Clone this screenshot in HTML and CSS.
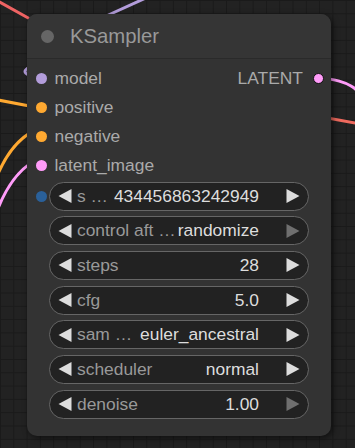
FILE: index.html
```html
<!DOCTYPE html>
<html lang="en">
<head>
    <meta charset="UTF-8">
    <meta name="viewport" content="width=device-width, initial-scale=1.0">
    <title>KSampler</title>
    <link rel="stylesheet" href="styles.css">
</head>
<body>
    <svg class="links" width="355" height="448" viewBox="0 0 355 448">
        <path d="M -4 0 L 30 19" stroke="#ee6363"/>
        <path d="M 104 17 L 148 -3" stroke="#b39ddb"/>
        <path d="M 45 80 Q 5 72 45 62" stroke="#b39ddb"/>
        <path d="M -2 100 L 40 108" stroke="#ffa931"/>
        <path d="M -8 190 Q 8 140 40 128" stroke="#ffa931"/>
        <path d="M -8 226 Q 8 172 40 158" stroke="#ff9cf9"/>
        <path d="M 317 77 C 338 80 344 82 351 86 S 358 92 362 102" stroke="#ff9cf9"/>
        <path d="M 322 117 L 360 124" stroke="#ef6a5e"/>
    </svg>

    <div class="node">
        <div class="title">
            <span class="title-dot"></span>
            <span>KSampler</span>
        </div>
        <div class="slots">
            <div class="slot">
                <span class="dot model"></span>model
                <span class="output">LATENT <span class="dot out"></span></span>
            </div>
            <div class="slot"><span class="dot cond"></span>positive</div>
            <div class="slot"><span class="dot cond"></span>negative</div>
            <div class="slot"><span class="dot latent"></span>latent_image</div>
        </div>
        <div class="widgets">
            <div class="wrow">
                <span class="wdot int"></span>
                <div class="widget">
                    <svg class="arrow" viewBox="0 0 13 14"><path d="M0 7 L13 0 L13 14 Z"/></svg>
                    <span class="label">s &hellip;</span>
                    <span class="value">434456863242949</span>
                    <svg class="arrow" viewBox="0 0 13 14"><path d="M13 7 L0 0 L0 14 Z"/></svg>
                </div>
            </div>
            <div class="wrow">
                <span class="wdot"></span>
                <div class="widget">
                    <svg class="arrow" viewBox="0 0 13 14"><path d="M0 7 L13 0 L13 14 Z"/></svg>
                    <span class="label">control aft &hellip;</span>
                    <span class="value">randomize</span>
                    <svg class="arrow dim" viewBox="0 0 13 14"><path d="M13 7 L0 0 L0 14 Z"/></svg>
                </div>
            </div>
            <div class="wrow">
                <span class="wdot"></span>
                <div class="widget">
                    <svg class="arrow" viewBox="0 0 13 14"><path d="M0 7 L13 0 L13 14 Z"/></svg>
                    <span class="label">steps</span>
                    <span class="value">28</span>
                    <svg class="arrow" viewBox="0 0 13 14"><path d="M13 7 L0 0 L0 14 Z"/></svg>
                </div>
            </div>
            <div class="wrow">
                <span class="wdot"></span>
                <div class="widget">
                    <svg class="arrow" viewBox="0 0 13 14"><path d="M0 7 L13 0 L13 14 Z"/></svg>
                    <span class="label">cfg</span>
                    <span class="value">5.0</span>
                    <svg class="arrow" viewBox="0 0 13 14"><path d="M13 7 L0 0 L0 14 Z"/></svg>
                </div>
            </div>
            <div class="wrow">
                <span class="wdot"></span>
                <div class="widget">
                    <svg class="arrow" viewBox="0 0 13 14"><path d="M0 7 L13 0 L13 14 Z"/></svg>
                    <span class="label">sam &hellip;</span>
                    <span class="value">euler_ancestral</span>
                    <svg class="arrow" viewBox="0 0 13 14"><path d="M13 7 L0 0 L0 14 Z"/></svg>
                </div>
            </div>
            <div class="wrow">
                <span class="wdot"></span>
                <div class="widget">
                    <svg class="arrow" viewBox="0 0 13 14"><path d="M0 7 L13 0 L13 14 Z"/></svg>
                    <span class="label">scheduler</span>
                    <span class="value">normal</span>
                    <svg class="arrow" viewBox="0 0 13 14"><path d="M13 7 L0 0 L0 14 Z"/></svg>
                </div>
            </div>
            <div class="wrow">
                <span class="wdot"></span>
                <div class="widget">
                    <svg class="arrow" viewBox="0 0 13 14"><path d="M0 7 L13 0 L13 14 Z"/></svg>
                    <span class="label">denoise</span>
                    <span class="value">1.00</span>
                    <svg class="arrow dim" viewBox="0 0 13 14"><path d="M13 7 L0 0 L0 14 Z"/></svg>
                </div>
            </div>
        </div>
    </div>
</body>
</html>
```

FILE: styles.css
```css
body {
    margin: 0;
    width: 355px;
    height: 448px;
    overflow: hidden;
    position: relative;
    font-family: "Liberation Sans", Arial, sans-serif;
    background-color: #222;
    background-image:
        linear-gradient(to right, #1a1a1a 1px, transparent 1px),
        linear-gradient(to bottom, #1a1a1a 1px, transparent 1px);
    background-size: 13.3px 13.3px;
}
.links {
    position: absolute;
    left: 0;
    top: 0;
}
.links path {
    fill: none;
    stroke-width: 3;
    stroke-linecap: round;
}
.node {
    position: absolute;
    left: 27px;
    top: 14px;
    width: 304px;
    background: #333;
    border-radius: 10px;
    box-shadow: 2px 2px 6px rgba(0, 0, 0, 0.55);
}
.title {
    height: 44px;
    display: flex;
    align-items: center;
    padding-left: 14px;
    background: #353535;
    border-radius: 10px 10px 0 0;
    border-bottom: 1px solid #2a2a2a;
    color: #999;
    font-size: 20.3px;
}
.title-dot {
    width: 13px;
    height: 13px;
    border-radius: 50%;
    background: #666;
    margin-right: 16px;
}
.slots {
    padding-top: 4.5px;
}
.slot {
    height: 29px;
    display: flex;
    align-items: center;
    padding: 0 7.5px 0 8.5px;
    color: #aaa;
    font-size: 17.4px;
}
.dot {
    width: 11px;
    height: 11px;
    border-radius: 50%;
    margin-right: 8px;
    flex: none;
}
.model { background: #b39ddb; }
.cond { background: #ffa931; }
.latent { background: #ff9cf9; }
.output {
    margin-left: auto;
    display: flex;
    align-items: center;
}
.dot.out {
    width: 9px;
    height: 9px;
    background: #ff9cf9;
    border: 1.5px solid #111;
    margin: 0 0 0 9.5px;
}
.widgets {
    display: flex;
    flex-direction: column;
    gap: 5.7px;
    padding: 2px 0 17px;
}
.wrow {
    display: flex;
    align-items: center;
    padding: 0 22px 0 8.5px;
}
.wdot {
    width: 11px;
    height: 11px;
    border-radius: 50%;
    margin-right: 2.5px;
    flex: none;
}
.wdot.int { background: #2a6099; }
.widget {
    flex: 1;
    height: 27px;
    display: flex;
    align-items: center;
    padding: 0 8px;
    background: #222;
    border: 1px solid #666;
    border-radius: 15px;
    font-size: 17.4px;
    white-space: nowrap;
}
.arrow {
    width: 14px;
    height: 14px;
    flex: none;
    fill: #ddd;
}
.arrow.dim {
    fill: #6f6f6f;
}
.label {
    margin-left: 5px;
    color: #999;
}
.value {
    margin-left: auto;
    margin-right: 27px;
    color: #ddd;
}
```
